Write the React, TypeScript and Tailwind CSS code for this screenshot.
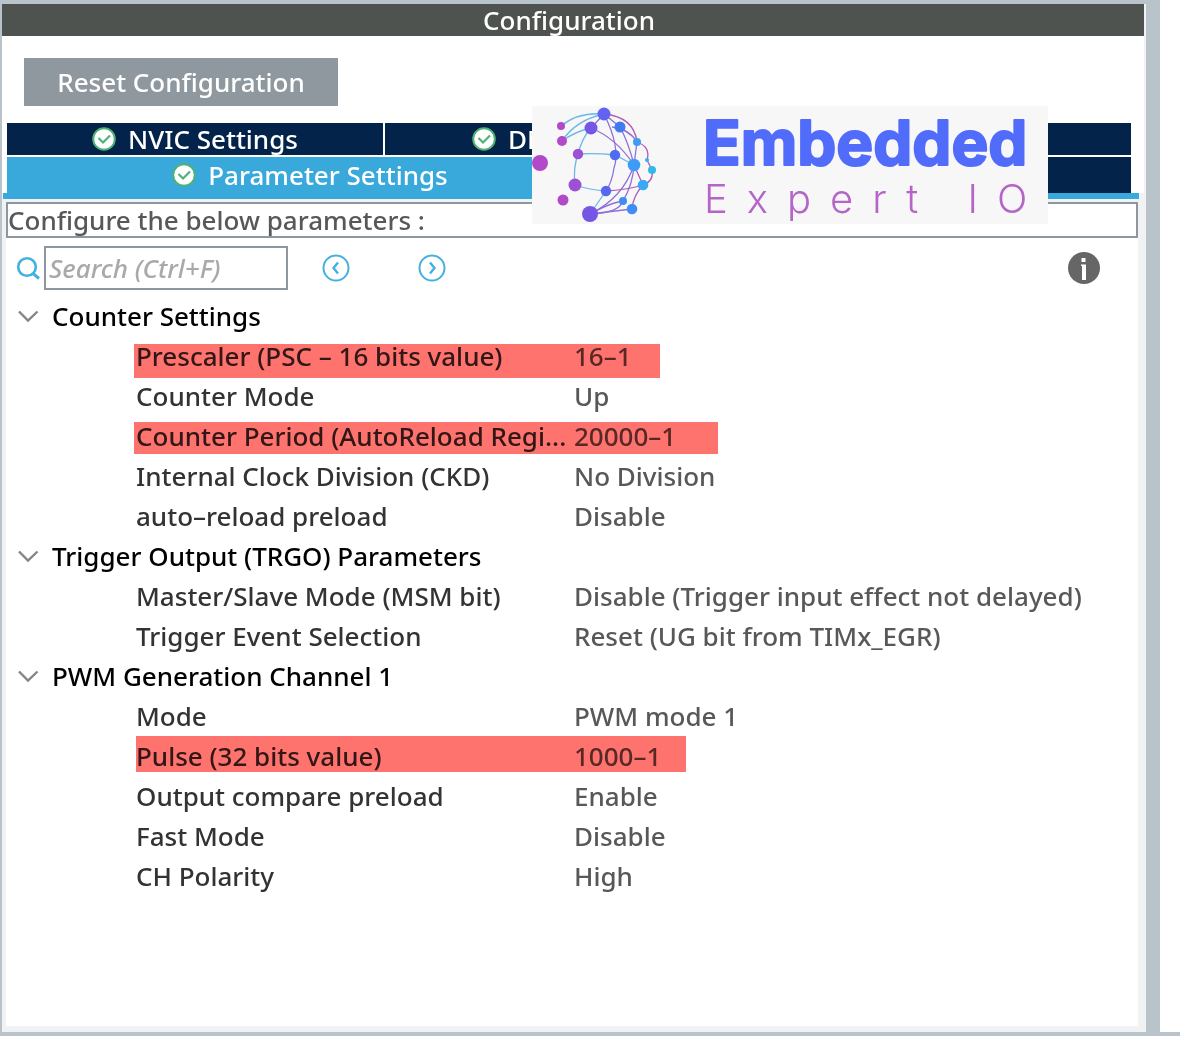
import { useState } from "react";

type Param = {
  label: string;
  value: string;
  mark?: string;
};

type Group = {
  title: string;
  params: Param[];
};

const groups: Group[] = [
  {
    title: "Counter Settings",
    params: [
      { label: "Prescaler (PSC – 16 bits value)", value: "16–1", mark: "left-32 top-2 h-[34px] w-[526px]" },
      { label: "Counter Mode", value: "Up" },
      { label: "Counter Period (AutoReload Regi...", value: "20000–1", mark: "left-32 top-1.5 h-8 w-[584px]" },
      { label: "Internal Clock Division (CKD)", value: "No Division" },
      { label: "auto–reload preload", value: "Disable" },
    ],
  },
  {
    title: "Trigger Output (TRGO) Parameters",
    params: [
      { label: "Master/Slave Mode (MSM bit)", value: "Disable (Trigger input effect not delayed)" },
      { label: "Trigger Event Selection", value: "Reset (UG bit from TIMx_EGR)" },
    ],
  },
  {
    title: "PWM Generation Channel 1",
    params: [
      { label: "Mode", value: "PWM mode 1" },
      { label: "Pulse (32 bits value)", value: "1000–1", mark: "left-[130px] top-0 h-9 w-[550px]" },
      { label: "Output compare preload", value: "Enable" },
      { label: "Fast Mode", value: "Disable" },
      { label: "CH Polarity", value: "High" },
    ],
  },
];

function CheckIcon() {
  return (
    <svg className="size-6 shrink-0" viewBox="0 0 24 24" aria-hidden="true">
      <circle cx="12" cy="12" r="10.8" fill="#fff" stroke="#4db375" strokeWidth="2" />
      <path d="M6.5 11l4.5 4.5 7-7" fill="none" stroke="#4db375" strokeWidth="2.2" />
    </svg>
  );
}

function ArrowIcon({ d }: { d: string }) {
  return (
    <svg className="size-7" viewBox="0 0 28 28" fill="none" stroke="#45b0e0" aria-hidden="true">
      <circle cx="14" cy="14" r="12.5" strokeWidth="2" />
      <path d={d} strokeWidth="2.4" />
    </svg>
  );
}

function Globe() {
  return (
    <svg className="h-[118px] w-[140px] shrink-0" viewBox="0 0 140 118" fill="none" aria-hidden="true">
      <g stroke="#6cb8e8" strokeWidth="1.3">
        <path d="M29 20Q46 6 72 8" />
        <path d="M30 35Q44 14 72 8" />
        <path d="M30 35Q44 25 59 22" />
        <path d="M59 22Q50 32 46 48Q41 62 43 79" />
        <path d="M46 48Q65 47 83 49L102 59" />
        <path d="M43 79Q58 84 74 85" />
        <path d="M74 85L58 108" />
      </g>
      <g stroke="#8f70d8" strokeWidth="1.3">
        <path d="M72 8Q89 42 82 62Q80 76 74 85" />
        <path d="M59 22Q84 32 102 59" />
        <path d="M59 22L72 8L88 21Q97 38 102 59" />
        <path d="M80 21Q97 23 105 36L102 59" />
        <path d="M58 108Q91 92 102 59" />
        <path d="M58 108Q87 107 91 95Q101 78 102 59" />
        <path d="M58 108Q80 96 92 95" />
        <path d="M58 108L100 103" />
      </g>
      <g stroke="#b25bb5" strokeWidth="1.3">
        <path d="M72 8Q102 11 105 36Q119 41 115 54L120 64Q122 75 111 79" />
        <path d="M102 59L111 79Q94 84 74 85" />
        <path d="M111 79Q101 90 100 103" />
      </g>
      <g fill="#b249c8">
        <circle cx="8" cy="57" r="8" />
        <circle cx="29" cy="20" r="4" />
        <circle cx="30" cy="35" r="5" />
        <circle cx="31" cy="94" r="5.5" />
        <circle cx="46" cy="48" r="5.2" fill="#9c50d4" />
        <circle cx="43" cy="79" r="6.5" fill="#9c50d4" />
      </g>
      <circle cx="58" cy="108" r="8" fill="#7657e5" />
      <circle cx="59" cy="22" r="6.5" fill="#7657e5" />
      <circle cx="72" cy="8" r="6.5" fill="#6263f0" />
      <circle cx="83" cy="49" r="5.2" fill="#506cf0" />
      <circle cx="74" cy="85" r="5.2" fill="#5868ee" />
      <circle cx="88" cy="21" r="5.5" fill="#427bf0" />
      <circle cx="105" cy="36" r="4" fill="#3f9cf0" />
      <circle cx="102" cy="59" r="6.3" fill="#3f9cf5" />
      <circle cx="91" cy="95" r="4" fill="#408df0" />
      <circle cx="100" cy="103" r="5.3" fill="#408ef5" />
      <circle cx="111" cy="79" r="5.3" fill="#37a9f5" />
      <circle cx="115" cy="54" r="2" fill="#37a9f5" />
      <circle cx="120" cy="64" r="4" fill="#33b8e8" />
    </svg>
  );
}

function Logo() {
  return (
    <div className="absolute left-[530px] top-[70px] flex h-[118px] w-[516px] bg-[#f7f7f8] font-['Inter',sans-serif]">
      <Globe />
      <svg className="h-[118px] w-[376px]" viewBox="0 0 376 118">
        <text
          x="31"
          y="59"
          fill="#516cfb"
          stroke="#516cfb"
          strokeWidth="2"
          strokeLinejoin="round"
          className="text-[62px] font-bold"
        >
          Embedded
        </text>
        <text x="32" y="107" fill="#b565c8" className="text-[40px] font-light tracking-[19px]">
          Expert IO
        </text>
      </svg>
    </div>
  );
}

function Tabs() {
  const [active, setActive] = useState("Parameter Settings");
  const tab = (name: string, hidden = false) => (
    <button
      type="button"
      role="tab"
      aria-selected={active === name}
      aria-label={name}
      onClick={() => setActive(name)}
      className={`flex items-center justify-center gap-3 whitespace-nowrap text-white ${
        active === name ? "bg-[#39a9dc]" : "bg-[#03234b]"
      }`}
    >
      {!hidden && (
        <>
          <CheckIcon />
          {name}
        </>
      )}
    </button>
  );

  return (
    <div role="tablist" className="flex flex-col gap-0.5 pl-[5px] pr-[13px]">
      <div className="grid h-8 grid-cols-[376fr_378fr_366fr] gap-0.5">
        {tab("NVIC Settings")}
        {tab("DMA Settings")}
        {tab("GPIO Settings", true)}
      </div>
      <div className="grid h-9 grid-cols-[606fr_516fr] gap-0.5">
        {tab("Parameter Settings")}
        {tab("User Constants", true)}
      </div>
    </div>
  );
}

function Toolbar() {
  return (
    <div className="flex h-[58px] items-start pt-2 pl-2.5 pr-[38px]">
      <label htmlFor="search" aria-label="Search" className="flex h-11 w-7 items-center">
        <svg className="size-6" viewBox="0 0 24 24" fill="none" stroke="#45b0e0" aria-hidden="true">
          <circle cx="11" cy="11" r="8.8" strokeWidth="2.6" />
          <path d="M17 17.5l6 5" strokeWidth="3" />
        </svg>
      </label>
      <input
        id="search"
        type="text"
        placeholder="Search (Ctrl+F)"
        className="h-11 w-[244px] border-2 border-[#8e979f] bg-white px-[3px] outline-none placeholder:italic placeholder:text-[#a9a9a9]"
      />
      <button type="button" aria-label="Previous" className="ml-[34px] flex h-11 items-center">
        <ArrowIcon d="M16 8.5L11.5 14l4.5 5.5" />
      </button>
      <button type="button" aria-label="Next" className="ml-[68px] flex h-11 items-center">
        <ArrowIcon d="M12 8.5l4.5 5.5-4.5 5.5" />
      </button>
      <button type="button" aria-label="Information" className="ml-auto flex h-11 items-center">
        <svg className="size-8" viewBox="0 0 32 32" aria-hidden="true">
          <circle cx="16" cy="16" r="16" fill="#666" />
          <path d="M13.5 6h4v4h-4zM13 12.5h5V28h-4V14H13z" fill="#fff" />
        </svg>
      </button>
    </div>
  );
}

function ParamGroup({ title, params }: Group) {
  const [open, setOpen] = useState(true);
  return (
    <tbody>
      <tr className="h-10">
        <th colSpan={2} className="p-0 text-left font-medium text-black">
          <button
            type="button"
            aria-expanded={open}
            onClick={() => setOpen(!open)}
            className="flex items-center gap-3 pl-3"
          >
            <svg className="h-6 w-[22px]" viewBox="0 0 22 24" fill="none" stroke="#858585" aria-hidden="true">
              <path d="M1 7.5L10 16.5l9.5-9" strokeWidth="2.4" />
            </svg>
            {title}
          </button>
        </th>
      </tr>
      {open &&
        params.map((p) => (
          <tr key={p.label} className="relative h-10">
            <td className="whitespace-nowrap p-0 pl-[130px] text-[#333]">{p.label}</td>
            <td className="whitespace-nowrap p-0 text-[#585858]">
              {p.value}
              {p.mark && <span className={`absolute bg-[#ff736e] mix-blend-multiply ${p.mark}`} />}
            </td>
          </tr>
        ))}
    </tbody>
  );
}

export default function App() {
  return (
    <div className="flex min-h-screen flex-col bg-white pb-2 font-['Noto_Sans','Open_Sans',sans-serif] text-[26px] leading-8 font-medium">
      <div className="flex flex-1 border-b-4 border-[#b8c3ca] pr-5">
        <main className="flex min-w-0 flex-1 flex-col border-l-2 border-t-4 border-[#b8c3ca] bg-[#f0f2f3]">
          <h1 className="mr-0.5 h-8 bg-[#4f5350] pr-2 text-center text-white">Configuration</h1>
          <div className="relative flex flex-1 flex-col">
            <div className="mr-0.5 bg-white">
              <div className="px-[22px] pt-[22px] pb-[17px]">
                <button type="button" className="flex h-12 w-[314px] items-center justify-center bg-[#8f989f] text-white">
                  Reset Configuration
                </button>
              </div>
              <Tabs />
            </div>
            <div className="ml-px mr-[7px] h-1.5 bg-[#39a9dc]" />
            <section className="mx-1 mr-2 mt-[3px] mb-1.5 flex flex-1 flex-col bg-white">
              <p className="h-9 border-2 border-[#8e979f] text-[#585858]">Configure the below parameters :</p>
              <Toolbar />
              <table className="w-full table-fixed border-collapse">
                <colgroup>
                  <col className="w-[568px]" />
                  <col />
                </colgroup>
                {groups.map((g) => (
                  <ParamGroup key={g.title} {...g} />
                ))}
              </table>
            </section>
            <Logo />
          </div>
        </main>
        <div className="w-3.5 bg-[#b8c3ca]" />
      </div>
    </div>
  );
}
